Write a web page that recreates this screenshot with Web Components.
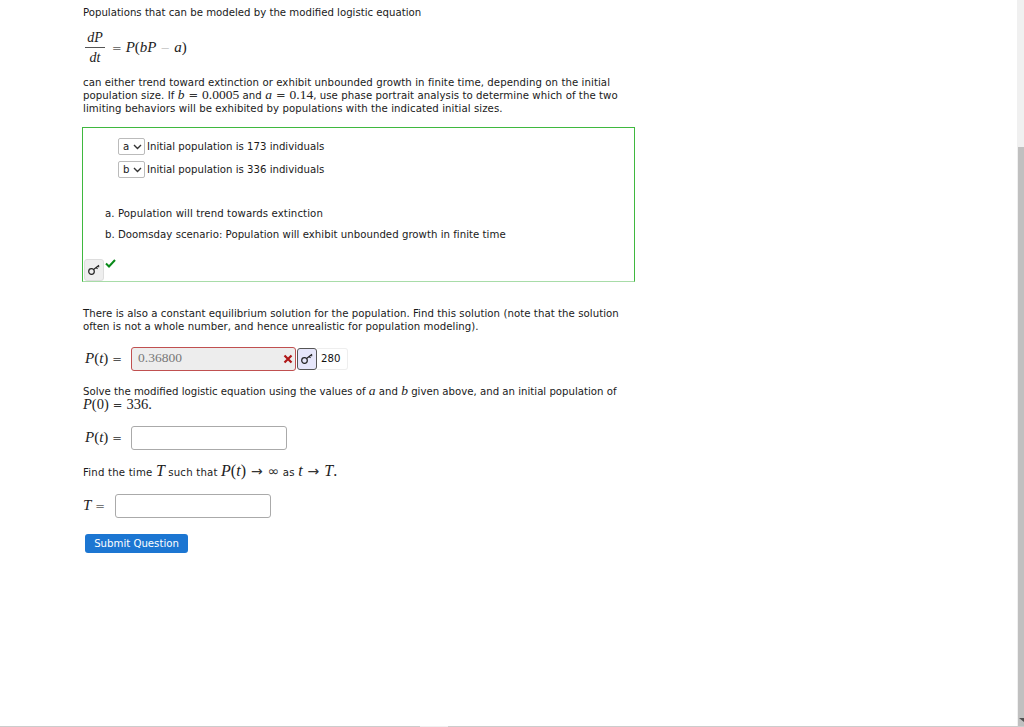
<!DOCTYPE html>
<html lang="en"><head><meta charset="utf-8"><title>Question</title>
<style>
html,body{margin:0;padding:0;height:727px;overflow:hidden;background:#fff}
body{font:11.3px/13px "DejaVu Sans Condensed","DejaVu Sans",sans-serif;font-stretch:condensed;color:#1a1a1a}
</style></head><body>
<q-page>
  <q-p style="margin-top:6px">Populations that can be modeled by the modified logistic equation</q-p>
  <q-row style="margin:11px 0 11px 2px;height:35px">
    <q-frac num="dP" den="dt"></q-frac><q-m style="margin-left:3px;font-size:15px"><q-o c="#777">=</q-o><i>P</i>(<i>bP</i><q-o c="#ccc" style="margin:0 4px">−</q-o><i>a</i>)</q-m>
  </q-row>
  <q-p style="letter-spacing:.07px">can either trend toward extinction or exhibit unbounded growth in finite time, depending on the initial<br>population size. If <q-m><i>b</i><q-o>=</q-o>0.0005</q-m> and <q-m><i>a</i><q-o>=</q-o>0.14</q-m>, use phase portrait analysis to determine which of the two<br>limiting behaviors will be exhibited by populations with the indicated initial sizes.</q-p>
  <q-box style="margin-top:12px">
    <q-match val="a">Initial population is 173 individuals</q-match>
    <q-match val="b" style="margin-top:6px">Initial population is 336 individuals</q-match>
    <q-p style="margin:29px 0 0 22px;letter-spacing:.1px">a. Population will trend towards extinction</q-p>
    <q-p style="margin:8px 0 0 22px;letter-spacing:.03px">b. Doomsday scenario: Population will exhibit unbounded growth in finite time</q-p>
    <q-row style="margin:18px 0 0 1px;align-items:flex-start" gap="1"><q-key></q-key><q-check></q-check></q-row>
  </q-box>
  <q-p style="margin-top:25px;letter-spacing:.06px">There is also a constant equilibrium solution for the population. Find this solution (note that the solution<br>often is not a whole number, and hence unrealistic for population modeling).</q-p>
  <q-row style="margin:14px 0 0 2px">
    <q-m style="width:46px;font-size:15px"><i>P</i>(<i>t</i>)<q-o c="#555">=</q-o></q-m>
    <q-input w="165" value="0.36800" state="bad"></q-input>
    <q-key tone="blue" style="margin-left:1px"></q-key>
    <q-tag>280</q-tag>
  </q-row>
  <q-p style="margin-top:14px">Solve the modified logistic equation using the values of <q-m><i>a</i></q-m> and <q-m><i>b</i></q-m> given above, and an initial population of<br><q-m style="font-size:14.5px;line-height:13px"><i>P</i>(0)<q-o>=</q-o>336.</q-m></q-p>
  <q-row style="margin:14px 0 0 2px">
    <q-m style="width:46px;font-size:15px"><i>P</i>(<i>t</i>)<q-o c="#555">=</q-o></q-m>
    <q-input w="156"></q-input>
  </q-row>
  <q-p style="margin-top:15px;letter-spacing:.2px">Find the time <q-m style="font-size:16px"><i>T</i></q-m> such that <q-m style="font-size:16px"><i>P</i>(<i>t</i>)<q-o style="font-size:14px;margin:0 5px">→</q-o><q-o style="font-size:14px;margin:0">∞</q-o></q-m> as <q-m style="font-size:16px"><i>t</i><q-o style="font-size:14px;margin:0 5px">→</q-o><i>T</i>.</q-m></q-p>
  <q-row style="margin:15px 0 0 0">
    <q-m style="width:32px;font-size:15px"><i>T</i><q-o c="#777">=</q-o></q-m>
    <q-input w="156"></q-input>
  </q-row>
  <q-submit style="margin:16px 0 0 2px">Submit Question</q-submit>
</q-page>
<q-scroll></q-scroll>
<script>
const def=(name,css,html,extra)=>{
  customElements.define(name,class extends HTMLElement{
    constructor(){super();const r=this.attachShadow({mode:'open'});
      r.innerHTML='<style>'+css+'</style>'+(typeof html==='function'?html(this):html);}
    connectedCallback(){extra&&extra(this);}
  });
};
const keySvg='<svg width="14" height="12" viewBox="0 0 14 12" fill="none" stroke="#222"><circle cx="4.5" cy="7.5" r="2.8" stroke-width="1.2"/><path d="M6.6 5.5 12 1.2M9.2 3.4l1.3 1.4M11 2l1.2 1.2" stroke-width="1.1"/></svg>';
def('q-page',':host{display:block;width:552px;margin-left:83px;white-space:nowrap}','<slot></slot>');
def('q-p',':host{display:block}','<slot></slot>');
def('q-row',':host{display:flex;align-items:center}','<slot></slot>',el=>{el.style.gap=(el.getAttribute('gap')||0)+'px'});
def('q-m',':host{display:inline-block;font-family:"Liberation Serif",serif;font-size:13.5px;line-height:11px;letter-spacing:0;font-stretch:normal;color:#222}','<slot></slot>');
def('q-o',':host{display:inline-block;font-family:"DejaVu Sans",sans-serif;font-stretch:normal;font-size:11.5px;margin:0 4px;color:#333}','<slot></slot>',el=>{const c=el.getAttribute('c');if(c)el.style.color=c});
def('q-frac',':host{display:inline-flex;flex-direction:column;align-items:center;font:italic 14px/15px "Liberation Serif",serif;font-stretch:normal;color:#222;width:20px}.n{border-bottom:1px solid #555;width:100%;text-align:center;padding-bottom:2px}.d{padding-top:2px}',el=>`<span class="n">${el.getAttribute('num')}</span><span class="d">${el.getAttribute('den')}</span>`);
def('q-box',':host{display:block;box-sizing:border-box;margin-left:-1px;width:553px;height:155px;border:1px solid #3fb83f;border-bottom-color:#a8dca8;padding:10px 0 0 0}','<slot></slot>');
def('q-match',':host{display:flex;align-items:center;gap:2px;margin-left:35px}.s{box-sizing:border-box;width:27px;height:17px;border:1px solid #bbb;border-radius:2px;display:flex;align-items:center;padding-left:4px;gap:4px;background:#fff}svg{display:block}',el=>`<span class="s">${el.getAttribute('val')}<svg width="9" height="6" viewBox="0 0 9 6" fill="none" stroke="#333" stroke-width="1.4"><path d="M1 1l3.5 3.5L8 1"/></svg></span><slot></slot>`);
def('q-key',':host{display:flex;align-items:center;justify-content:center;box-sizing:border-box;width:20px;height:22px;background:#eee;border:1px solid #ddd;border-radius:3px}:host([tone=blue]){background:#e6e6fa;border-color:#555}',keySvg);
def('q-check',':host{display:block;height:10px}svg{display:block}','<svg width="11" height="9" viewBox="0 0 11 9" fill="none" stroke="#0a8a1a" stroke-width="2"><path d="M1 4.5 4 7.5 10 1"/></svg>');
def('q-input',':host{display:flex;align-items:center;box-sizing:border-box;height:24px;border:1px solid #aaa;border-radius:3px;background:#fff;padding:0 0 2px 6px;font:13.5px "Liberation Serif",serif;font-stretch:normal;color:#777;position:relative}:host([state=bad]){background:#ededed;border-color:#c05050}.x{position:absolute;right:2px;top:6px;display:block}',el=>{el.style.width=el.getAttribute('w')+'px';const v=el.getAttribute('value')||'';return `<span>${v}</span>`+(el.getAttribute('state')==='bad'?'<svg class="x" width="10" height="10" viewBox="0 0 10 10" stroke="#b01818" stroke-width="2.2"><path d="M1.5 1.5 8.5 8.5M8.5 1.5 1.5 8.5"/></svg>':'')});
def('q-tag',':host{display:flex;align-items:center;box-sizing:border-box;width:31px;height:22px;border:1px solid #eee;border-left:0;border-radius:0 3px 3px 0;padding:0 0 1px 4px;color:#111}','<slot></slot>');
def('q-submit',':host{display:inline-flex;align-items:center;justify-content:center;box-sizing:border-box;width:103px;height:19px;background:#1c76d2;color:#fff;border-radius:3px}','<slot></slot>');
def('q-scroll',':host{position:absolute;inset:0;pointer-events:none;display:block}.t{position:absolute;right:0;top:0;width:7px;height:727px;background:#f0f0f0}.h{position:absolute;right:0;top:147px;width:6px;height:579px;background:#c0c0c0}.b{position:absolute;left:0;right:0;bottom:0;height:1px;background:#ccc}.b i{position:absolute;left:420px;width:28px;height:1px;background:#eee}.a{position:absolute;right:0;top:718px;width:0;height:0;border-left:5px solid transparent;border-top:4px solid #505050}','<div class="t"></div><div class="h"></div><div class="b"><i></i></div><div class="a"></div>');
</script>
</body></html>
